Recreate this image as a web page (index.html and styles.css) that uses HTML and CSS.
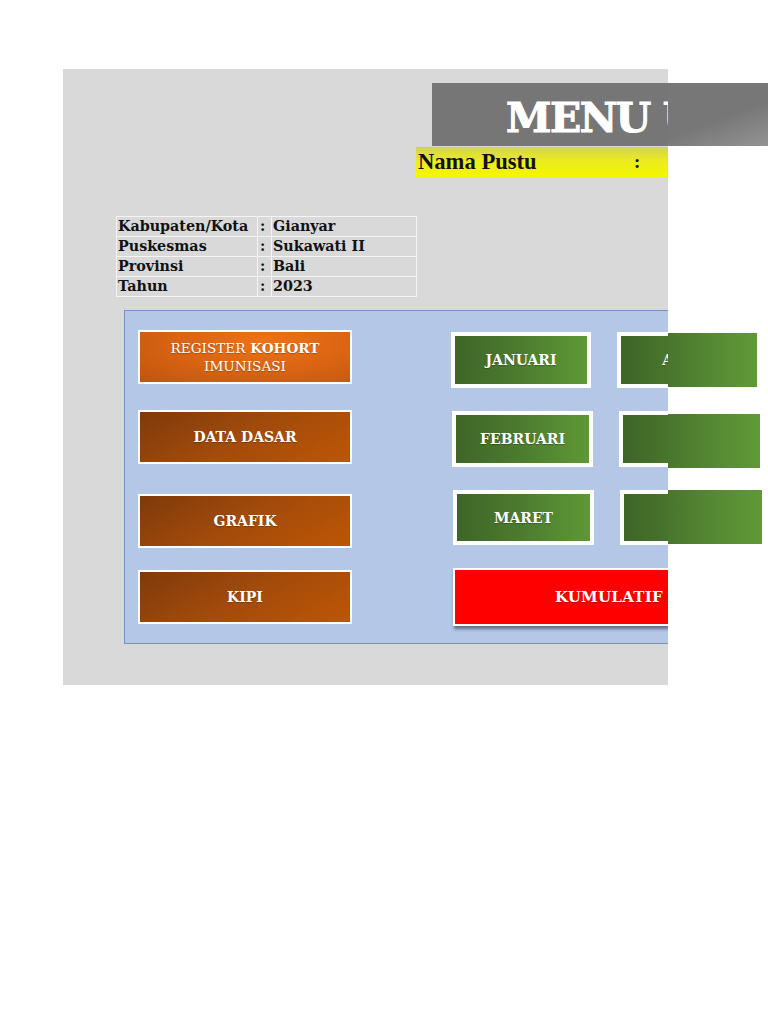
FILE: index.html
```html
<!DOCTYPE html>
<html>
<head>
<meta charset="utf-8">
<link rel="stylesheet" href="styles.css">
</head>
<body>
<div class="page">
  <div class="sheet">
    <div class="title-bar"><span class="title-text">MENU UTAMA</span></div>
    <div class="pustu-bar"><span class="pustu-label">Nama Pustu</span><span class="pustu-colon">:</span></div>
    <table class="info">
      <tr><td class="k">Kabupaten/Kota</td><td class="c">:</td><td class="v">Gianyar</td></tr>
      <tr><td class="k">Puskesmas</td><td class="c">:</td><td class="v">Sukawati II</td></tr>
      <tr><td class="k">Provinsi</td><td class="c">:</td><td class="v">Bali</td></tr>
      <tr><td class="k">Tahun</td><td class="c">:</td><td class="v">2023</td></tr>
    </table>
    <div class="menu-panel">
      <div class="col-left">
        <div class="btn orange register"><span class="label"><span class="thin">REGISTER</span> KOHORT<br><span class="thin">IMUNISASI</span></span></div>
        <div class="btn orange b2"><span class="label">DATA DASAR</span></div>
        <div class="btn orange b3"><span class="label">GRAFIK</span></div>
        <div class="btn orange b4"><span class="label">KIPI</span></div>
      </div>
      <div class="col-right">
        <div class="month-row r1">
          <div class="btn green"><span class="label">JANUARI</span></div>
          <div class="btn green second"><span class="label">APRIL</span></div>
        </div>
        <div class="month-row r2">
          <div class="btn green"><span class="label">FEBRUARI</span></div>
          <div class="btn green second"><span class="label">MEI</span></div>
        </div>
        <div class="month-row r3">
          <div class="btn green"><span class="label">MARET</span></div>
          <div class="btn green second"><span class="label">JUNI</span></div>
        </div>
        <div class="btn red"><span class="label">KUMULATIF</span></div>
      </div>
    </div>
  </div>
  <div class="stub stub-title"></div>
  <div class="stub stub-g1"></div>
  <div class="stub stub-g2"></div>
  <div class="stub stub-g3"></div>
</div>
</body>
</html>
```

FILE: styles.css
```css
html, body {
  margin: 0;
  padding: 0;
  background: #ffffff;
}
.page {
  position: relative;
  width: 768px;
  height: 1024px;
  padding: 69px 0 0 63px;
  box-sizing: border-box;
}
.sheet {
  width: 605px;
  height: 616px;
  background: #d9d9d9;
  overflow: hidden;
  padding-top: 14px;
  box-sizing: border-box;
}
.title-bar {
  margin-left: 369px;
  width: 400px;
  height: 63px;
  background: #767676;
  box-sizing: border-box;
  padding-left: 74px;
  display: flex;
  align-items: center;
  white-space: nowrap;
}
.title-text {
  font-family: "DejaVu Serif", serif;
  font-weight: 900;
  font-size: 41px;
  color: #ffffff;
  letter-spacing: -1.5px;
  line-height: 1;
  padding-top: 8px;
  -webkit-text-stroke: 1px #ffffff;
}
.pustu-bar {
  margin-left: 353px;
  margin-top: 1px;
  width: 260px;
  height: 30px;
  background: linear-gradient(to bottom, #d2d255 0%, #ebeb20 45%, #f6f600 100%);
  display: flex;
  align-items: center;
  white-space: nowrap;
  font-family: "Liberation Serif", serif;
  font-weight: bold;
  font-size: 22.6px;
  color: #111;
}
.pustu-label {
  margin-left: 2px;
  width: 216px;
}
.pustu-colon {
  font-size: 19px;
}
.info {
  margin-left: 53px;
  margin-top: 39px;
  border-collapse: collapse;
  width: 301px;
  font-family: "DejaVu Serif", serif;
  font-weight: bold;
  font-size: 14.3px;
  color: #111;
}
.info td {
  border: 1px solid #f4f4f4;
  height: 19px;
  padding: 0 1px;
  line-height: 19px;
  white-space: nowrap;
}
.info td.k { width: 138px; }
.info td.c { width: 10px; padding-left: 2px; }
.menu-panel {
  margin-left: 61px;
  margin-top: 13px;
  width: 600px;
  height: 334px;
  background: #b4c7e7;
  border: 1px solid #7293c2;
  box-sizing: border-box;
  display: flex;
}
.btn {
  box-sizing: border-box;
  border: 2px solid #ffffff;
  color: #ffffff;
  font-family: "DejaVu Serif", serif;
  font-weight: bold;
  font-size: 14px;
  display: flex;
  align-items: center;
  justify-content: center;
  text-align: center;
  white-space: nowrap;
  text-shadow: 0 1px 1px rgba(0,0,0,0.25);
}
.label {
  display: block;
}
.col-left {
  margin-left: 13px;
  display: flex;
  flex-direction: column;
}
.orange {
  width: 214px;
  height: 54px;
  background: linear-gradient(150deg, #7e3a0b 0%, #a34b0c 50%, #bd5605 100%);
}
.orange.register {
  margin-top: 19px;
  line-height: 18px;
  font-size: 13.6px;
  background: radial-gradient(ellipse at 60% 20%, #ee7317 0%, #dc6513 45%, #bf560f 100%);
}
.thin {
  font-weight: normal;
}
.orange.b2 { margin-top: 26px; }
.orange.b3 { margin-top: 30px; }
.orange.b4 { margin-top: 22px; }
.col-right {
  margin-left: 99px;
  display: flex;
  flex-direction: column;
}
.month-row {
  display: flex;
}
.month-row.r1 { margin-top: 21px; }
.month-row.r2 { margin-top: 23px; margin-left: 1px; }
.month-row.r3 { margin-top: 23px; margin-left: 2px; }
.green {
  width: 140px;
  height: 56px;
  border-width: 4px;
  background: linear-gradient(to right, #3e6527 0%, #4d7c2f 50%, #5e9836 100%);
}
.green.second {
  margin-left: 26px;
  width: 140px;
}
.month-row.r2 .green { width: 141px; }
.month-row.r3 .green { width: 141px; height: 55px; }
.red {
  margin-top: 23px;
  margin-left: 2px;
  width: 312px;
  height: 58px;
  background: #ff0000;
  font-size: 15px;
  letter-spacing: 0.3px;
  box-shadow: 1px 3px 3px rgba(40,50,80,0.6);
}
.stub {
  position: absolute;
}
.stub-title {
  left: 668px;
  top: 83px;
  width: 100px;
  height: 63px;
  background: linear-gradient(160deg, #777777 0%, #777777 55%, #939393 100%);
}
.stub-g1, .stub-g2, .stub-g3 {
  background: linear-gradient(to right, #4a762d 0%, #5a9035 70%, #5f9a37 100%);
}
.stub-g1 { left: 668px; top: 333px; width: 89px; height: 54px; }
.stub-g2 { left: 668px; top: 414px; width: 92px; height: 54px; }
.stub-g3 { left: 668px; top: 490px; width: 94px; height: 54px; }
```
